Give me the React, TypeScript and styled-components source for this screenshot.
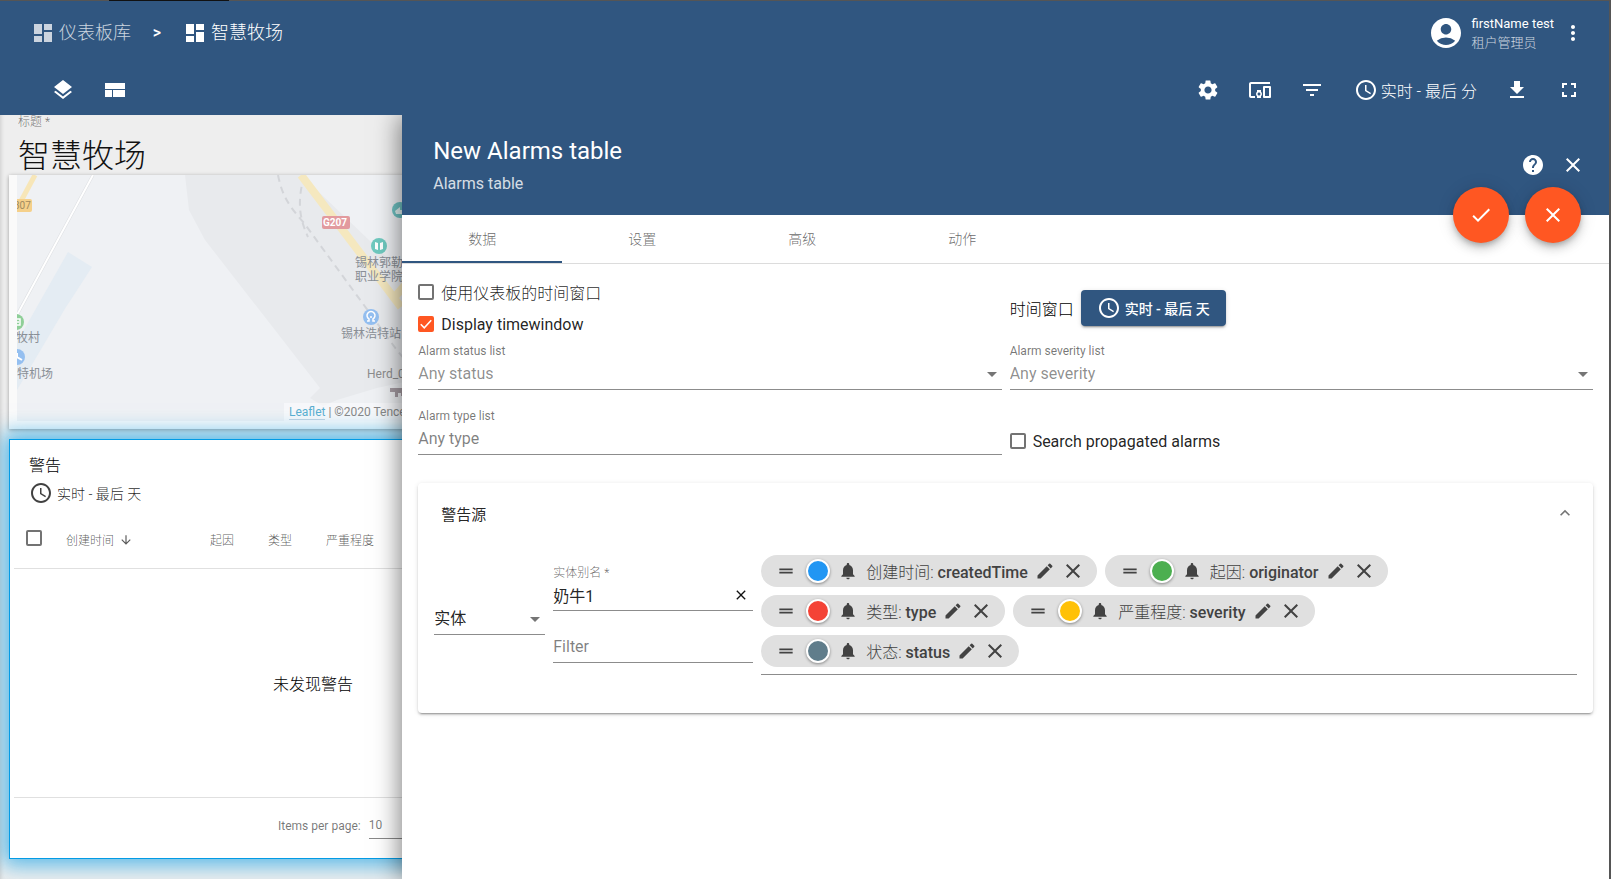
import React, { useState } from 'react';
import styled, { createGlobalStyle, css } from 'styled-components';
import {
  MdDashboard, MdLayers, MdSettings, MdFilterList, MdFileDownload,
  MdFullscreen, MdAccountCircle, MdMoreVert, MdHelp, MdClose, MdCheck, MdArrowDownward,
  MdExpandLess, MdDragHandle, MdNotifications, MdEdit, MdQueryBuilder, MdArrowDropDown,
} from 'react-icons/md';

const font = "Roboto, 'Noto Sans CJK SC', sans-serif";
const primary = '#305680';
const accent = '#ff5722';

const GlobalStyle = createGlobalStyle`
  * { box-sizing: border-box; }
  html, body, #root { height: 100%; }
  body { margin: 0; font-family: ${font}; font-size: 16px; color: rgba(0,0,0,.87); overflow: hidden; }
  button, input, select { font: inherit; color: inherit; }
  button { border: 0; background: none; padding: 0; cursor: pointer; }
  h1, h2, p { margin: 0; font-weight: 400; }
  a { text-decoration: none; }
  svg { display: block; flex: none; }
`;

const Page = styled.div`
  display: flex;
  flex-direction: column;
  min-height: 100vh;
  border-right: 2px solid #555;
  background: #eee;
`;
const WindowEdge = styled.div`
  display: flex;
  height: 1px;
  background: #555;
  &::before { content: ''; width: 120px; margin-left: 109px; background: #111; }
`;
const TopBar = styled.header`
  display: flex;
  align-items: center;
  height: 64px;
  padding: 0 24px 0 31px;
  background: ${primary};
  color: #fff;
`;
const Crumbs = styled.nav`
  display: flex;
  align-items: center;
  flex: 1;
  font-size: 18px;
  line-height: 24px;
  font-weight: 300;
`;
const Crumb = styled.a<{ $muted?: boolean }>`
  display: flex;
  align-items: center;
  gap: 4px;
  color: #fff;
  opacity: ${p => (p.$muted ? 0.75 : 1)};
`;
const Separator = styled.span`
  width: 52px;
  text-align: center;
  font-weight: 500;
  font-size: 16px;
`;
const User = styled.div`
  display: flex;
  align-items: center;
  gap: 7px;
`;
const UserText = styled.div`
  display: flex;
  flex-direction: column;
  font-size: 13px;
  line-height: 19px;
  margin-right: 7px;
  span + span { opacity: .75; font-weight: 300; }
`;
const ToolBar = styled.div`
  display: flex;
  align-items: center;
  justify-content: space-between;
  height: 50px;
  padding: 0 28px 0 51px;
  background: ${primary};
  color: #fff;
`;
const ToolGroup = styled.div`
  display: flex;
  align-items: center;
  gap: 28px;
`;
const IconButton = styled.button`
  display: flex;
  align-items: center;
  justify-content: center;
`;
const TimeButton = styled.button`
  display: flex;
  align-items: center;
  gap: 3px;
  margin-left: 2px;
  font-weight: 300;
`;
const Main = styled.main`
  display: flex;
  flex: 1;
`;

const Dashboard = styled.section`
  flex: 1 1 0;
  min-width: 0;
  overflow: hidden;
  background: #eee;
  box-shadow: inset 4px 0 5px -4px rgba(0,0,0,.2);
`;
const TitleField = styled.div`
  display: flex;
  flex-direction: column;
  height: 60px;
  padding-left: 18px;
  label { font-size: 12px; line-height: 15px; color: rgba(0,0,0,.54); font-weight: 300; }
  input {
    width: 300px; height: 46px; padding: 0; border: 0; outline: 0; background: none;
    font-size: 32px; font-weight: 300; color: #111;
  }
`;
const MapCard = styled.div`
  width: 610px;
  height: 254px;
  margin-left: 9px;
  padding: 0 8px 8px;
  background: #fafafa;
  box-shadow: 0 1px 4px rgba(0,0,0,.35);
`;
const MapView = styled.div`
  position: relative;
  height: 246px;
  overflow: hidden;
  background: #eff1f4;
`;
const Attribution = styled.div`
  position: absolute;
  left: 267px;
  bottom: 0;
  padding: 0 5px;
  font-size: 12px;
  line-height: 18px;
  white-space: nowrap;
  color: #888;
  background: rgba(255,255,255,.5);
  a { color: #5aafd0; border-bottom: 1px solid #c3d4e0; }
`;
const AlarmCard = styled.div`
  position: relative;
  display: flex;
  flex-direction: column;
  width: 608px;
  height: 420px;
  margin: 10px 0 0 9px;
  padding: 0 4px;
  border: 1px solid #039be5;
  background: #fff;
  box-shadow: 0 0 20px 6px rgba(3,155,229,.65);
`;
const AlarmTitle = styled.h2`
  padding: 14px 0 0 15px;
  font-size: 16px;
  line-height: 24px;
  font-weight: 300;
  color: #000;
`;
const AlarmTime = styled.button`
  display: flex;
  align-items: center;
  gap: 4px;
  height: 30px;
  padding-left: 15px;
  font-size: 14px;
  font-weight: 300;
  svg { opacity: .85; }
`;
const AlarmTable = styled.table`
  width: 100%;
  border-collapse: collapse;
  table-layout: fixed;
  font-size: 12px;
  th {
    height: 60px; padding: 4px 0 0; text-align: left; font-weight: 300; color: rgba(0,0,0,.65);
    border-bottom: 1px solid #e0e0e0;
  }
  th:first-child { padding-left: 12px; }
  td {
    height: 229px; padding: 0; text-align: center; font-size: 16px; font-weight: 300; color: #000;
    border-bottom: 1px solid #e0e0e0;
  }
`;
const SortLabel = styled.span`
  display: flex;
  align-items: center;
  gap: 5px;
`;
const Pager = styled.div`
  display: flex;
  align-items: center;
  gap: 8px;
  height: 56px;
  padding-left: 264px;
  font-size: 12px;
  color: rgba(0,0,0,.54);
  select {
    appearance: none; width: 56px; height: 26px; border: 0; border-bottom: 1px solid #888;
    background: none; padding: 0; outline: 0;
  }
`;

const Drawer = styled.section`
  position: relative;
  flex: 0 0 75%;
  background: #fff;
  box-shadow: -2px 0 24px rgba(0,0,0,.5);
  clip-path: inset(0 0 0 -40px);
`;
const DrawerHead = styled.header`
  display: flex;
  align-items: center;
  justify-content: space-between;
  height: 100px;
  padding: 0 24px 0 31px;
  background: ${primary};
  color: #fff;
`;
const DrawerTitle = styled.h1`
  padding-top: 3px;
  font-size: 24px;
  line-height: 34px;
`;
const DrawerSub = styled.p`
  font-size: 16px;
  line-height: 32px;
  opacity: .8;
`;
const HeadActions = styled.div`
  display: flex;
  gap: 16px;
`;
const FabRow = styled.div`
  position: absolute;
  top: 72px;
  right: 28px;
  display: flex;
  gap: 16px;
`;
const Fab = styled.button`
  display: flex;
  align-items: center;
  justify-content: center;
  width: 56px;
  height: 56px;
  border-radius: 50%;
  background: ${accent};
  color: #fff;
  box-shadow: 0 3px 5px -1px rgba(0,0,0,.2), 0 6px 10px rgba(0,0,0,.14), 0 1px 18px rgba(0,0,0,.12);
`;
const Tabs = styled.div`
  display: flex;
  height: 49px;
  border-bottom: 1px solid #dcdcdc;
`;
const Tab = styled.button<{ $active?: boolean }>`
  width: 160px;
  height: 48px;
  font-size: 14px;
  font-weight: 300;
  color: rgba(0,0,0,.6);
  border-bottom: 2px solid ${p => (p.$active ? primary : 'transparent')};
`;
const Form = styled.form`
  padding: 12px 16px;
`;
const Columns = styled.div`
  display: grid;
  grid-template-columns: 1fr 1fr;
  column-gap: 8px;
`;
const Stack = styled.div`
  display: flex;
  flex-direction: column;
`;
const CheckLabel = styled.label<{ $light?: boolean }>`
  display: flex;
  align-items: center;
  gap: 7px;
  height: 32px;
  font-weight: ${p => (p.$light ? 300 : 400)};
`;
const PropagatedRow = styled.div`
  padding-top: 20px;
`;
const CheckBox = styled.input`
  appearance: none;
  flex: none;
  width: 16px;
  height: 16px;
  margin: 0;
  border: 2px solid #737373;
  border-radius: 2px;
  &:checked {
    border-color: ${accent};
    background: ${accent} url("data:image/svg+xml,%3Csvg xmlns='http://www.w3.org/2000/svg' viewBox='0 0 24 24'%3E%3Cpath fill='none' stroke='white' stroke-width='2.6' d='M3 12.5l6 6L21 5.5'/%3E%3C/svg%3E") center / 14px no-repeat;
  }
`;
const WindowRow = styled.div`
  display: flex;
  align-items: center;
  gap: 7px;
  height: 64px;
  font-weight: 300;
  color: #000;
`;
const RaisedButton = styled.button`
  display: flex;
  align-items: center;
  gap: 4px;
  height: 36px;
  padding: 0 16px;
  border-radius: 4px;
  background: ${primary};
  color: #fff;
  font-size: 14px;
  font-weight: 500;
  box-shadow: 0 3px 1px -2px rgba(0,0,0,.2), 0 2px 2px rgba(0,0,0,.14), 0 1px 5px rgba(0,0,0,.12);
`;
const Field = styled.div`
  display: flex;
  flex-direction: column;
  height: 65px;
  label { padding: 3px 0 1px; font-size: 12px; line-height: 16px; color: rgba(0,0,0,.54); }
`;
const control = css`
  appearance: none;
  width: 100%;
  height: 30px;
  padding: 0 0 2px;
  border: 0;
  border-bottom: 1px solid #8c8c8c;
  border-radius: 0;
  background: none;
  outline: 0;
`;
const TextInput = styled.input`
  ${control}
  &::placeholder { color: rgba(0,0,0,.5); opacity: 1; }
`;
const Select = styled.select<{ $muted?: boolean }>`
  ${control}
  color: ${p => (p.$muted ? 'rgba(0,0,0,.45)' : 'inherit')};
`;
const ControlBox = styled.div`
  display: flex;
  position: relative;
`;
const Trailing = styled.span`
  position: absolute;
  right: -2px;
  top: 2px;
  display: flex;
  color: #757575;
  pointer-events: none;
`;
const ClearButton = styled(IconButton)`
  position: absolute;
  right: 4px;
  top: 6px;
  color: #111;
`;
const Card = styled.section`
  margin-top: 13px;
  height: 230px;
  border-radius: 4px;
  box-shadow: 0 3px 1px -2px rgba(0,0,0,.2), 0 2px 2px rgba(0,0,0,.14), 0 1px 5px rgba(0,0,0,.12);
`;
const CardHead = styled.div`
  display: flex;
  justify-content: space-between;
  align-items: flex-start;
  height: 64px;
  padding: 20px 18px 0 23px;
  h2 { font-size: 15px; line-height: 24px; }
`;
const SourceRow = styled.div`
  display: grid;
  grid-template-columns: 111px 200px 1fr;
  column-gap: 8px;
  align-items: start;
  padding: 8px 16px 0;
`;
const TypeBox = styled.div`
  padding-top: 50px;
`;
const AliasBox = styled.div`
  display: flex;
  flex-direction: column;
  gap: 22px;
  padding-top: 7px;
  label { display: block; padding-top: 3px; font-size: 12px; line-height: 16px; color: rgba(0,0,0,.6); font-weight: 300; }
`;
const Chips = styled.ul`
  display: flex;
  flex-wrap: wrap;
  gap: 8px;
  margin: 0;
  padding: 0 0 7px;
  list-style: none;
  border-bottom: 1px solid #8c8c8c;
`;
const Chip = styled.li`
  display: flex;
  align-items: center;
  height: 32px;
  padding: 0 12px 0 15px;
  border-radius: 16px;
  background: #e0e0e0;
  color: #424242;
`;
const Swatch = styled.button<{ $color: string }>`
  width: 24px;
  height: 24px;
  margin: 0 8px 0 10px;
  border: 2px solid #fff;
  border-radius: 50%;
  background: ${p => p.$color};
  box-shadow: 0 1px 3px rgba(0,0,0,.4);
`;
const ChipText = styled.span`
  margin: 0 7px 0 8px;
  white-space: pre;
  font-weight: 300;
  b { font-weight: 500; }
`;
const ChipClose = styled(IconButton)`
  margin-left: 6px;
`;

const chips = [
  { name: '创建时间', key: 'createdTime', color: '#2196f3' },
  { name: '起因', key: 'originator', color: '#4caf50' },
  { name: '类型', key: 'type', color: '#f44336' },
  { name: '严重程度', key: 'severity', color: '#ffc107' },
  { name: '状态', key: 'status', color: '#607d8b' },
];

const LayoutIcon = () => (
  <svg width="24" height="24" viewBox="0 0 24 24" fill="currentColor">
    <path d="M2 19h7v-7H2zm8 0h12v-7H10zM2 5v6h20V5z" />
  </svg>
);

const DevicesIcon = () => (
  <svg width="24" height="24" viewBox="0 0 24 24" fill="currentColor">
    <path d="M3 6h19V4H3c-1.100 0-2 .9-2 2v12c0 1.100.9 2 2 2h4v-2H3V6zm10 6H9v1.780c-.61.55-1 1.330-1 2.220s.39 1.670 1 2.220V20h4v-1.780c.61-.55 1-1.340 1-2.220s-.39-1.670-1-2.220V12zm-2 5.500c-.83 0-1.500-.67-1.500-1.500s.67-1.500 1.500-1.500 1.500.67 1.500 1.500-.67 1.500-1.500 1.500zM22 8h-6c-.5 0-1 .5-1 1v10c0 .5.5 1 1 1h6c.5 0 1-.5 1-1V9c0-.5-.5-1-1-1zm-1 10h-4v-8h4v8z" />
  </svg>
);

const PastureMap = () => (
  <svg width="594" height="246" viewBox="0 0 594 246" fontFamily={font} fontSize="12" fill="#8a8f96">
    <path d="M168 0l4 35 16 30 115 148-10 10 13 8 14-6 40-12 60-13V130L284 0z" fill="#e8eaed" />
    <path d="M51 77l24 15-20 31-6 9L0 215v-48z" fill="#e4ecf3" />
    <path d="M18 0L3 28" stroke="#f7e6b8" strokeWidth="5" />
    <path d="M76 0L0 140" stroke="#dcdee1" strokeWidth="3" fill="none" />
    <path d="M76 0L0 140" stroke="#fff" strokeWidth="2" fill="none" />
    <path d="M261 0c4 20 10 30 26 48l92 126 10 12M287 0c-6 25-6 40 4 62" stroke="#d3d5d9" strokeWidth="2" strokeDasharray="7 5" fill="none" />
    <path d="M284 0l100 132M376 124l12-14" stroke="#f5e8bf" strokeWidth="8" fill="none" />
    <rect x="-8" y="24" width="23" height="13" rx="2" fill="#f5d08a" />
    <text x="-3" y="34" fontSize="10" fill="#a08a60">307</text>
    <rect x="305" y="41" width="28" height="13" rx="2" fill="#e29a9e" />
    <text x="306" y="51" fontSize="10" fontWeight="700" fill="#fff">G207</text>
    <circle cx="383" cy="35" r="8" fill="#6fc3c3" />
    <path d="M378 36l5-4v3h3v4h-7z" fill="#fff" opacity=".8" />
    <circle cx="362" cy="71" r="8" fill="#6fc9bf" />
    <path d="M358 67l3 1v7l-3-1zM366 67l-3 1v7l3-1z" fill="#fff" />
    <text x="338" y="92">锡林郭勒</text>
    <text x="338" y="106">职业学院</text>
    <circle cx="354" cy="142" r="8" fill="#94bff0" />
    <path d="M350 146h2v-2a4 4 0 1 1 4 0v2h2M354 141v2" stroke="#fff" strokeWidth="1.5" fill="none" />
    <text x="324" y="163">锡林浩特站</text>
    <circle cx="-1" cy="147" r="8" fill="#8fcf98" />
    <path d="M-4 144h7v6h-7M2 147h-3" stroke="#fff" strokeWidth="1.5" fill="none" />
    <text x="-1" y="167">牧村</text>
    <circle cx="0" cy="182" r="8" fill="#94bff0" />
    <path d="M0 178v4l5 3" stroke="#fff" strokeWidth="2" fill="none" />
    <text x="0" y="203">特机场</text>
    <text x="350" y="203" fill="#8d8d8d">Herd_01</text>
    <path d="M373 213h14v8h-3v-3h-3v4h-3v-5h-5z" fill="#a89ea5" />
  </svg>
);

export default function App() {
  const [tab, setTab] = useState('数据');
  return (
    <>
      <GlobalStyle />
      <Page>
        <WindowEdge />
        <TopBar>
          <Crumbs>
            <Crumb href="#dashboards" $muted><MdDashboard size={24} />仪表板库</Crumb>
            <Separator>&gt;</Separator>
            <Crumb href="#ranch"><MdDashboard size={24} />智慧牧场</Crumb>
          </Crumbs>
          <User>
            <MdAccountCircle size={36} />
            <UserText><span>firstName test</span><span>租户管理员</span></UserText>
          </User>
          <IconButton aria-label="more"><MdMoreVert size={24} /></IconButton>
        </TopBar>
        <ToolBar>
          <ToolGroup>
            <IconButton aria-label="layers"><MdLayers size={24} /></IconButton>
            <IconButton aria-label="layout"><LayoutIcon /></IconButton>
          </ToolGroup>
          <ToolGroup>
            <IconButton aria-label="settings"><MdSettings size={24} /></IconButton>
            <IconButton aria-label="aliases"><DevicesIcon /></IconButton>
            <IconButton aria-label="filters"><MdFilterList size={24} /></IconButton>
            <TimeButton><MdQueryBuilder size={24} />实时 - 最后 分</TimeButton>
            <IconButton aria-label="export"><MdFileDownload size={24} /></IconButton>
            <IconButton aria-label="fullscreen"><MdFullscreen size={24} /></IconButton>
          </ToolGroup>
        </ToolBar>
        <Main>
          <Dashboard>
            <TitleField>
              <label htmlFor="title">标题 *</label>
              <input id="title" defaultValue="智慧牧场" />
            </TitleField>
            <MapCard>
              <MapView>
                <PastureMap />
                <Attribution><a href="#leaflet">Leaflet</a> | ©2020 Tencent</Attribution>
              </MapView>
            </MapCard>
            <AlarmCard>
              <AlarmTitle>警告</AlarmTitle>
              <AlarmTime><MdQueryBuilder size={24} />实时 - 最后 天</AlarmTime>
              <AlarmTable>
                <colgroup>
                  <col width="52" /><col width="144" /><col width="58" /><col width="58" /><col />
                </colgroup>
                <thead>
                  <tr>
                    <th><CheckBox type="checkbox" aria-label="select all" /></th>
                    <th><SortLabel>创建时间<MdArrowDownward size={14} /></SortLabel></th>
                    <th>起因</th>
                    <th>类型</th>
                    <th>严重程度</th>
                  </tr>
                </thead>
                <tbody><tr><td colSpan={5}>未发现警告</td></tr></tbody>
              </AlarmTable>
              <Pager>
                <label htmlFor="per-page">Items per page:</label>
                <select id="per-page"><option>10</option></select>
              </Pager>
            </AlarmCard>
          </Dashboard>

          <Drawer>
            <DrawerHead>
              <div>
                <DrawerTitle>New Alarms table</DrawerTitle>
                <DrawerSub>Alarms table</DrawerSub>
              </div>
              <HeadActions>
                <IconButton aria-label="help"><MdHelp size={24} /></IconButton>
                <IconButton aria-label="close"><MdClose size={24} /></IconButton>
              </HeadActions>
            </DrawerHead>
            <FabRow>
              <Fab aria-label="apply"><MdCheck size={24} /></Fab>
              <Fab aria-label="cancel"><MdClose size={24} /></Fab>
            </FabRow>
            <Tabs role="tablist">
              {['数据', '设置', '高级', '动作'].map(t => (
                <Tab key={t} role="tab" aria-selected={t === tab} $active={t === tab} onClick={() => setTab(t)}>{t}</Tab>
              ))}
            </Tabs>
            <Form onSubmit={e => e.preventDefault()}>
              <Columns>
                <Stack>
                  <CheckLabel $light><CheckBox type="checkbox" /><span>使用仪表板的时间窗口</span></CheckLabel>
                  <CheckLabel><CheckBox type="checkbox" defaultChecked /><span>Display timewindow</span></CheckLabel>
                </Stack>
                <WindowRow>
                  <span>时间窗口</span>
                  <RaisedButton type="button"><MdQueryBuilder size={24} />实时 - 最后 天</RaisedButton>
                </WindowRow>
                <Field>
                  <label htmlFor="status">Alarm status list</label>
                  <ControlBox>
                    <Select id="status" $muted><option>Any status</option></Select>
                    <Trailing><MdArrowDropDown size={24} /></Trailing>
                  </ControlBox>
                </Field>
                <Field>
                  <label htmlFor="severity">Alarm severity list</label>
                  <ControlBox>
                    <Select id="severity" $muted><option>Any severity</option></Select>
                    <Trailing><MdArrowDropDown size={24} /></Trailing>
                  </ControlBox>
                </Field>
                <Field>
                  <label htmlFor="type">Alarm type list</label>
                  <TextInput id="type" placeholder="Any type" />
                </Field>
                <PropagatedRow>
                  <CheckLabel><CheckBox type="checkbox" /><span>Search propagated alarms</span></CheckLabel>
                </PropagatedRow>
              </Columns>
              <Card>
                <CardHead>
                  <h2>警告源</h2>
                  <IconButton type="button" aria-label="collapse"><MdExpandLess size={20} color="#757575" /></IconButton>
                </CardHead>
                <SourceRow>
                  <TypeBox>
                    <ControlBox>
                      <Select aria-label="实体"><option>实体</option></Select>
                      <Trailing><MdArrowDropDown size={24} /></Trailing>
                    </ControlBox>
                  </TypeBox>
                  <AliasBox>
                    <div>
                      <label htmlFor="alias">实体别名 *</label>
                      <ControlBox>
                        <TextInput id="alias" defaultValue="奶牛1" />
                        <ClearButton type="button" aria-label="clear"><MdClose size={16} /></ClearButton>
                      </ControlBox>
                    </div>
                    <TextInput aria-label="Filter" placeholder="Filter" />
                  </AliasBox>
                  <Chips>
                    {chips.map(c => (
                      <Chip key={c.key}>
                        <MdDragHandle size={20} />
                        <Swatch type="button" aria-label="color" $color={c.color} />
                        <MdNotifications size={20} />
                        <ChipText>{c.name}: <b>{c.key}</b></ChipText>
                        <IconButton type="button" aria-label="edit"><MdEdit size={20} /></IconButton>
                        <ChipClose type="button" aria-label="remove"><MdClose size={24} /></ChipClose>
                      </Chip>
                    ))}
                  </Chips>
                </SourceRow>
              </Card>
            </Form>
          </Drawer>
        </Main>
      </Page>
    </>
  );
}
